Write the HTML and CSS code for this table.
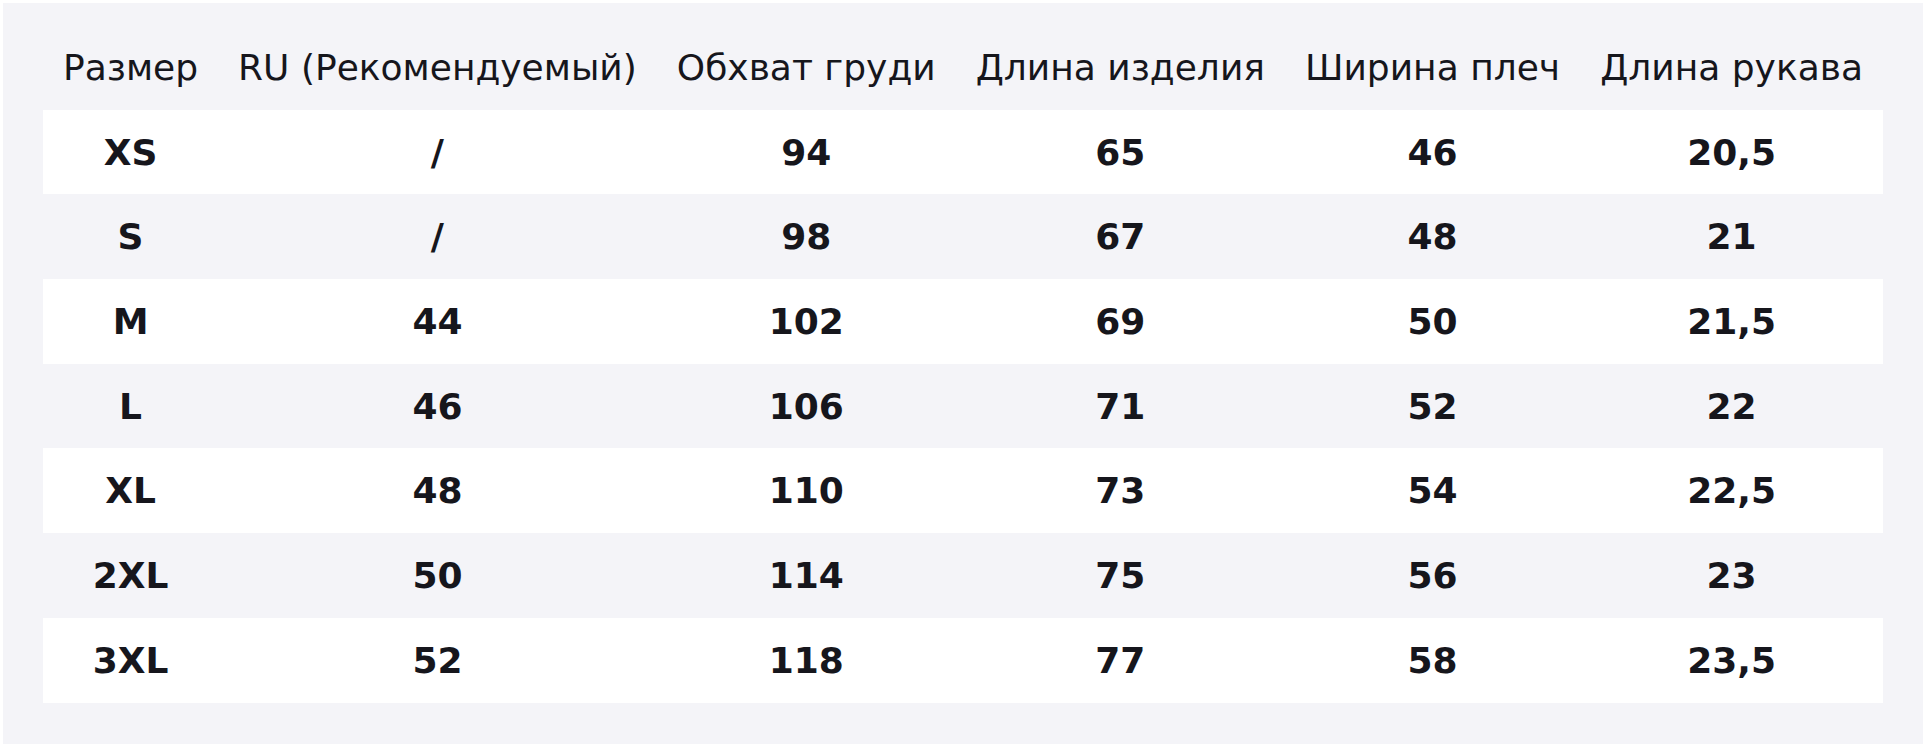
FILE: index.html
```html
<!DOCTYPE html>
<html lang="ru">
<head>
<meta charset="utf-8">
<title>Таблица размеров</title>
<link rel="stylesheet" href="styles.css">
</head>
<body>
<div class="panel">
  <table class="sizes">
    <thead>
      <tr>
        <th>Размер</th>
        <th>RU (Рекомендуемый)</th>
        <th>Обхват груди</th>
        <th>Длина изделия</th>
        <th>Ширина плеч</th>
        <th>Длина рукава</th>
      </tr>
    </thead>
    <tbody>
      <tr class="odd"><td>XS</td><td>/</td><td>94</td><td>65</td><td>46</td><td>20,5</td></tr>
      <tr><td>S</td><td>/</td><td>98</td><td>67</td><td>48</td><td>21</td></tr>
      <tr class="odd"><td>M</td><td>44</td><td>102</td><td>69</td><td>50</td><td>21,5</td></tr>
      <tr><td>L</td><td>46</td><td>106</td><td>71</td><td>52</td><td>22</td></tr>
      <tr class="odd"><td>XL</td><td>48</td><td>110</td><td>73</td><td>54</td><td>22,5</td></tr>
      <tr><td>2XL</td><td>50</td><td>114</td><td>75</td><td>56</td><td>23</td></tr>
      <tr class="odd"><td>3XL</td><td>52</td><td>118</td><td>77</td><td>58</td><td>23,5</td></tr>
    </tbody>
  </table>
</div>
</body>
</html>
```

FILE: styles.css
```css
html, body {
  margin: 0;
  padding: 0;
  background: #ffffff;
}
body {
  padding: 3px;
  font-family: "DejaVu Sans", "Liberation Sans", sans-serif;
  color: #16161c;
}
.panel {
  background: #f4f4f8;
  padding: 22px 40px 41px;
}
.sizes {
  width: 100%;
  border-collapse: collapse;
  border-spacing: 0;
}
.sizes th,
.sizes td {
  height: 84.7px;
  padding: 0 20px;
  text-align: center;
  vertical-align: middle;
  white-space: nowrap;
  box-sizing: border-box;
}
.sizes th {
  font-size: 36px;
  font-weight: normal;
}
.sizes td {
  font-size: 36px;
  font-weight: bold;
}
.sizes tr.odd td {
  background: #ffffff;
}
```
